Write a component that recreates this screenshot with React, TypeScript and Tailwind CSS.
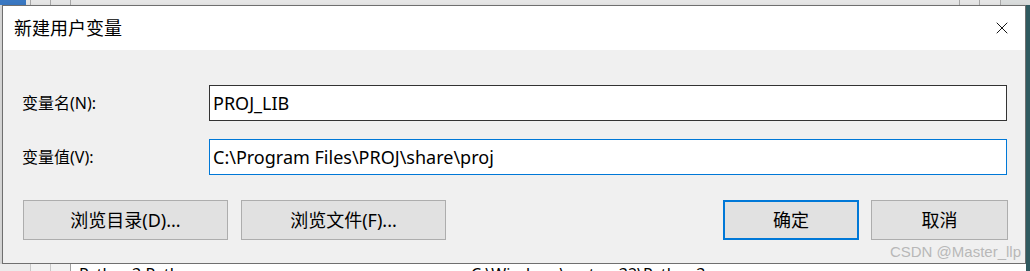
import { X } from 'lucide-react';

const ui = "font-['Segoe_UI','Noto_Sans','Noto_Sans_CJK_SC',sans-serif]";

function Field({ label, value, focused }: { label: string; value: string; focused?: boolean }) {
    return (
        <div className="flex items-center h-[36px]">
            <div className="w-[187px] text-[16px] text-[#000]">{label}</div>
            <div
                className={`w-[798px] h-[36px] bg-white flex items-center pl-[3px] text-[18px] text-black border ${
                    focused ? 'border-[#0078d7]' : 'border-[#333333]'
                }`}
            >
                {value}
            </div>
        </div>
    );
}

function Btn({ label, w, primary }: { label: string; w: string; primary?: boolean }) {
    return (
        <button
            className={`${w} h-[40px] bg-[#e1e1e1] text-[18px] text-black flex items-center justify-center ${
                primary ? 'border-2 border-[#0078d7]' : 'border border-[#adadad]'
            }`}
        >
            {label}
        </button>
    );
}

export default function App() {
    return (
        <div className={`w-[1030px] h-[271px] overflow-hidden flex flex-col bg-[#f4f4f4] ${ui}`}>
            {/* window behind, top edge */}
            <div className="h-[5px] flex bg-[#e6e6e6]">
                <div className="w-[26px] bg-[#3a78c2]" />
                <div className="w-[4px]" />
                <div className="w-[20px] border-l border-[#a8a8a8]" />
                <div className="w-[20px] border-l border-[#a8a8a8]" />
                <div className="flex-1 border-l border-[#a8a8a8]" />
                <div className="w-[20px] border-l border-[#a8a8a8]" />
                <div className="w-[21px] border-l border-[#a8a8a8]" />
                <div className="w-[30px] border-l border-[#a8a8a8] bg-[#d9dcdc]" />
            </div>

            <div className="flex h-[259px]">
                <div className="w-[2px] bg-[#d8d8d8]" />
                {/* dialog */}
                <div className="w-[1024px] border border-[#6f6f6f] flex flex-col shadow-[2px_2px_4px_rgba(0,0,0,0.25)]">
                    <div className="h-[44px] bg-white flex items-center justify-between pl-[11px] pr-[13px]">
                        <span className="text-[18px] text-black">新建用户变量</span>
                        <X size={20} strokeWidth={1.1} className="text-black" />
                    </div>
                    <div className="flex-1 bg-[#f0f0f0] pl-[19px] pt-[35px] relative">
                        <div className="flex flex-col gap-[18px]">
                            <Field label="变量名(N):" value="PROJ_LIB" />
                            <Field label="变量值(V):" value="C:\Program Files\PROJ\share\proj" focused />
                        </div>
                        <div className="flex items-center mt-[25px] pl-[1px] pr-[17px]">
                            <div className="flex gap-[13px]">
                                <Btn label="浏览目录(D)..." w="w-[205px]" />
                                <Btn label="浏览文件(F)..." w="w-[205px]" />
                            </div>
                            <div className="flex-1" />
                            <div className="flex gap-[12px]">
                                <Btn label="确定" w="w-[136px]" primary />
                                <Btn label="取消" w="w-[137px]" />
                            </div>
                        </div>
                        <span className="absolute right-[4px] bottom-[4px] font-['Liberation_Sans',sans-serif] text-[15px] leading-none text-[#b8b8b8]">
                            CSDN @Master_llp
                        </span>
                    </div>
                </div>
                <div className="flex-1 bg-[#2f5a60]" />
            </div>

            {/* window behind, bottom edge */}
            <div className="flex-1 flex overflow-hidden bg-white">
                <div className="w-[30px] bg-[#ececec]" />
                <div className="w-[20px] border-l border-[#c8c8c8] bg-[#f2f2f2]" />
                <div className="w-[20px] border-l border-[#c8c8c8] bg-[#f2f2f2]" />
                <div className="flex-1 border-l border-[#a0a0a0] pl-[8px] pt-[2px] text-[16px] leading-none text-black whitespace-nowrap">
                    Python3 Path{'\u00a0'.repeat(70)}C:\Windows\system32\Python3
                </div>
                <div className="w-[4px] bg-[#2f5a60]" />
            </div>
        </div>
    );
}
